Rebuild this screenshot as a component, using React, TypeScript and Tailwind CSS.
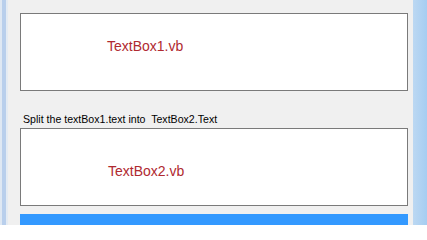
const App = () => {
  return (
    <div className="flex h-[225px] w-[427px] overflow-hidden bg-[#f0f0f0]" style={{ fontFamily: '"Liberation Sans", Arial, sans-serif' }}>
      {/* left window edge */}
      <div className="flex w-[8px] shrink-0">
        <div className="w-[2px] bg-[#dfe8f3]" />
        <div className="w-[4px] bg-[#b9cfec]" />
        <div className="w-[2px] bg-[#e4ebf3]" />
      </div>

      {/* form body */}
      <div className="flex flex-1 flex-col pl-[12px] pr-[5px] pt-[13px]">
        <div className="h-[78px] w-[388px] shrink-0 border border-[#7a7a7a] bg-white pl-[86px] pt-[20px]">
          <span className="text-[14px] leading-[16px] text-[#b02a30]">TextBox1.vb</span>
        </div>

        <div className="mt-[21px] pl-[3px] text-[10.6px] leading-[14px] text-black">
          Split the textBox1.text into&nbsp; TextBox2.Text
        </div>

        <div className="mt-[2px] h-[78px] w-[388px] shrink-0 border border-[#7a7a7a] bg-white pl-[87px] pt-[30px]">
          <span className="text-[14px] leading-[16px] text-[#b02a30]">TextBox2.vb</span>
        </div>

        <div className="mt-[8px] h-[20px] w-[388px] shrink-0 bg-[#3399ff]" />
      </div>

      {/* right window edge */}
      <div className="w-[14px] shrink-0 bg-gradient-to-r from-[#bcd8f2] to-[#a6cdf1]" />
    </div>
  );
};

export default App;
